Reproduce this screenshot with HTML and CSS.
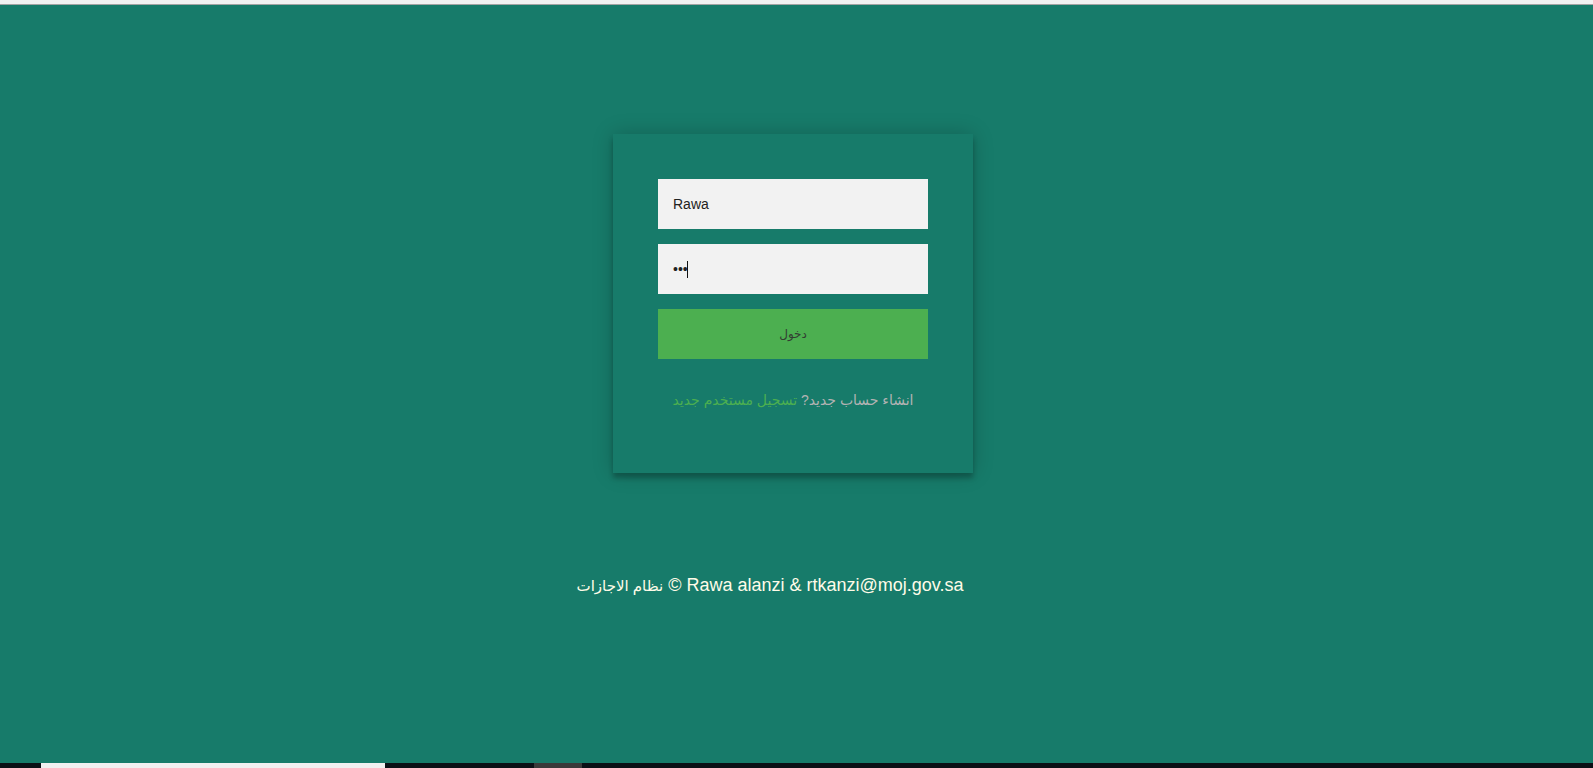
FILE: index.html
```html
<!DOCTYPE html>
<html lang="ar">
<head>
<meta charset="utf-8">
<title>نظام الاجازات</title>
<link rel="stylesheet" href="styles.css">
</head>
<body>
<div class="top-strip"></div>
<main class="page">
  <div class="login-page">
    <form class="form" onsubmit="return false">
      <input class="field" type="text" value="Rawa">
      <div class="field-wrap">
        <input class="field" type="password" value="123">
        <span class="caret"></span>
      </div>
      <button class="btn" type="button">دخول</button>
      <p class="message">انشاء حساب جديد? <a href="#">تسجيل مستخدم جديد</a></p>
    </form>
  </div>
  <footer class="footer"><span class="footer-ar">نظام الاجازات</span> © Rawa alanzi &amp; rtkanzi@moj.gov.sa</footer>
</main>
<div class="taskbar">
  <span class="tb-gap"></span>
  <span class="tb-light"></span>
  <span class="tb-space1"></span>
  <span class="tb-grey"></span>
  <span class="tb-rest"></span>
</div>
</body>
</html>
```
FILE: styles.css
```css
html, body {
  margin: 0;
  padding: 0;
  height: 100%;
}
body {
  display: flex;
  flex-direction: column;
  height: 768px;
  overflow: hidden;
  background: #177b6a;
  font-family: "Liberation Sans", "DejaVu Sans", sans-serif;
}
.top-strip {
  height: 4px;
  background: #f1f1f1;
  border-bottom: 1px solid #a3a3a3;
  flex: none;
}
.page {
  flex: 1;
  display: flex;
  flex-direction: column;
  align-items: center;
  padding-right: 7px;
}
.login-page {
  width: 360px;
  padding-top: 129px;
}
.form {
  box-sizing: border-box;
  width: 360px;
  height: 339px;
  padding: 45px;
  background: #177b6a;
  text-align: center;
  box-shadow: 0 0 20px 0 rgba(0, 0, 0, 0.2), 0 5px 5px 0 rgba(0, 0, 0, 0.24);
}
.field-wrap {
  position: relative;
}
.field {
  display: block;
  box-sizing: border-box;
  width: 100%;
  height: 50px;
  margin: 0 0 15px;
  padding: 0 15px;
  border: 0;
  outline: 0;
  background: #f2f2f2;
  color: #222;
  font-family: "Liberation Sans", "DejaVu Sans", sans-serif;
  font-size: 14px;
}
.caret {
  position: absolute;
  left: 29px;
  top: 17px;
  width: 1px;
  height: 17px;
  background: #111;
}
.btn {
  display: block;
  width: 100%;
  height: 50px;
  border: 0;
  background: #4caf50;
  color: #333d33;
  font-family: "Liberation Sans", "DejaVu Sans", sans-serif;
  font-size: 12px;
  cursor: pointer;
}
.message {
  margin: 33px 0 0;
  color: #b3b3b3;
  font-size: 14px;
  white-space: nowrap;
}
.message a {
  color: #4caf50;
  text-decoration: none;
}
.footer {
  margin-top: 102px;
  margin-right: 46px;
  color: #fffbe8;
  font-size: 18px;
  white-space: nowrap;
}
.footer-ar {
  font-size: 15px;
}
.taskbar {
  flex: none;
  height: 5px;
  display: flex;
  background: #0b1016;
}
.tb-gap { width: 41px; }
.tb-light { width: 344px; background: #f0f0f0; }
.tb-space1 { width: 149px; }
.tb-grey { width: 48px; background: #3a3a3a; }
.tb-rest { flex: 1; }
```
